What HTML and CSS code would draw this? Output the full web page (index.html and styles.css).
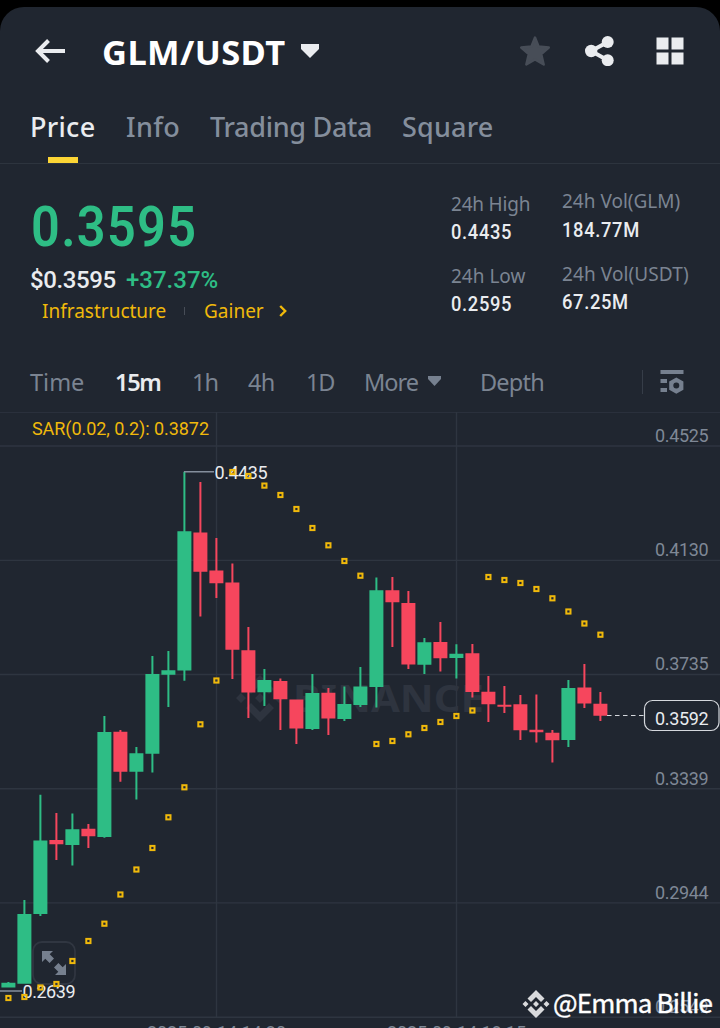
FILE: index.html
```html
<!DOCTYPE html>
<html lang="en">
<head>
<meta charset="utf-8">
<title>GLM/USDT</title>
<link rel="stylesheet" href="styles.css">
</head>
<body>
<main class="screen">
  <header class="header">
    <svg class="back" width="32" height="26" viewBox="0 0 32 26"><path d="M31 13H4M14.500 2.500 4 13 14.500 23.500" fill="none" stroke="#eaecef" stroke-width="4"/></svg>
    <h1 class="pair">GLM/USDT</h1>
    <svg class="caret" width="18" height="14" viewBox="0 0 18 14"><path d="M0 0H18V5L9 14 0 5Z" fill="#eaecef"/></svg>
    <svg class="star" width="30" height="30" viewBox="0 0 30 30"><path d="M15 1.500 18.600 10.500 28.800 11.500 21.300 18.200 23.700 28.500 15 23.500 6.300 28.500 8.700 18.200 1.200 11.500 11.400 10.500Z" fill="#474d57" stroke="#474d57" stroke-width="2.400" stroke-linejoin="round"/></svg>
    <svg class="share" width="30" height="30" viewBox="0 0 30 30"><g fill="#eaecef"><circle cx="6.200" cy="15" r="6.200"/><circle cx="22.700" cy="6" r="6"/><circle cx="22.700" cy="24.200" r="6"/></g><path d="M22.700 6 6.200 15 22.700 24.200" fill="none" stroke="#eaecef" stroke-width="4"/></svg>
    <svg class="grid" width="28" height="28" viewBox="0 0 28 28"><path d="M.500.500h12v12H.500zM15.500.500h12v12h-12zM.500 15.500h12v12H.500zM15.500 15.500h12v12h-12z" fill="#eaecef"/></svg>
  </header>

  <nav class="tabs">
    <span class="tab tab-on">Price</span>
    <span class="tab tab-info">Info</span>
    <span class="tab tab-data">Trading Data</span>
    <span class="tab tab-square">Square</span>
  </nav>

  <section class="summary">
    <div class="quote">
      <div class="last">0.3595</div>
      <div class="sub"><span class="usd">$0.3595</span><span class="pct">+37.37%</span></div>
      <div class="tags"><span class="tag-infra">Infrastructure</span><i class="tick"></i><span class="tag-gain">Gainer</span>
        <svg class="chev" width="8" height="12" viewBox="0 0 8 12"><path d="M1.200 1 6.200 6 1.200 11" fill="none" stroke="#f0b90b" stroke-width="2.400"/></svg></div>
    </div>
    <div class="stats stats-left">
      <span class="label high">24h High</span><span class="value">0.4435</span>
      <span class="label low">24h Low</span><span class="value">0.2595</span>
    </div>
    <div class="stats stats-right">
      <span class="label volg">24h Vol(GLM)</span><span class="value">184.77M</span>
      <span class="label volu">24h Vol(USDT)</span><span class="value">67.25M</span>
    </div>
  </section>

  <nav class="ranges">
    <span class="r-time">Time</span>
    <span class="r-15 active">15m</span>
    <span class="r-1h">1h</span>
    <span class="r-4h">4h</span>
    <span class="r-1d">1D</span>
    <span class="r-more">More</span>
    <svg class="more-caret" width="13" height="10" viewBox="0 0 13 10"><path d="M0 0H13V3L6.500 10 0 3Z" fill="#76808f"/></svg>
    <span class="r-depth">Depth</span>
    <i class="divider"></i>
    <svg class="settings" width="24" height="25" viewBox="0 0 24 25"><path d="M.500 1H23.500V5H.500ZM.500 10H7V14H.500ZM.500 19H7V23H.500Z" fill="#76808f"/><path fill-rule="evenodd" d="M16.300 8.500 23.400 12.500V20.700L16.300 24.700 9.200 20.700V12.500ZM16.300 13.600a3 3 0 1 0 0 6 3 3 0 0 0 0-6Z" fill="#76808f"/></svg>
  </nav>

  <svg class="chart" width="720" height="616" viewBox="0 412 720 616">
    <defs>
      <marker id="dot" markerUnits="userSpaceOnUse" markerWidth="8" markerHeight="8" refX="4" refY="4"><rect x="1.900" y="1.900" width="4.200" height="4.200" fill="none" stroke="#f0b90b" stroke-width="2"/></marker>
    </defs>
    <path class="gridline" d="M0 412H720M0 446H720M0 560.400H720M0 674.500H720M0 788.800H720M0 902.900H720M0 1017.200H720M216.500 412V1017M456.500 412V1017"/>

    <g class="watermark">
      <path d="M260 675 274 689 269 694 260 685 251 694 246 689ZM241 693 246 698 241 703 236 698ZM260 693 265 698 260 703 255 698ZM279 693 284 698 279 703 274 698ZM246 708 251 703 260 712 269 703 274 708 260 722Z"/>
      <text x="293" y="712" textLength="191" lengthAdjust="spacingAndGlyphs">BINANCE</text>
    </g>

    <g class="expand">
      <rect x="33" y="942" width="42" height="42" rx="9"/>
      <path d="M42 951H53L49.700 954.300 54 958.600 49.600 963 45.300 958.700 42 962ZM66 975H55L58.300 971.700 54 967.400 58.400 963 62.700 967.300 66 964Z"/>
    </g>

    <path class="wick up" d="M8.400 982V987M24.400 900V983M40.400 794.700V916M72.400 813.500V865.500M104.400 716V837.700M136.400 747V799.600M152.400 656V772.500M168.400 651V707M184.400 471.700V680.700M264.400 669V706M312.400 674V730M344.400 686.500V721M360.400 667V707M376.400 577.500V707.500M424.400 638V674M456.400 644.300V678.500M568.400 680V747"/>
    <path class="wick down" d="M56.400 813V860M88.400 824V848M120.400 730V781.700M200.400 482V616.500M216.400 538V598M232.400 563.500V679M248.400 627V718M280.400 678.500V730M296.400 700V744M328.400 688V735M392.400 577V647M408.400 591V669M440.400 622V671.500M472.400 644V697.500M488.400 676V722M504.400 686V713M520.400 695V740M536.400 694.500V742.500M552.400 730V762.500M584.400 664V708M600.400 692V721"/>
    <path class="body up" d="M8.400 982.700V987.400M24.400 914V983.700M40.400 840.400V914M72.400 829.200V845M104.400 732V837M136.400 753.300V771.700M152.400 674V753.700M168.400 670.200V674.700M184.400 531.300V670.600M264.400 680V692.200M312.400 693V729M344.400 704V719M360.400 686.400V705M376.400 590.200V687M424.400 642.300V664.700M456.400 653.700V658M568.400 688V740"/>
    <path class="body down" d="M56.400 840V844.200M88.400 828.800V836.200M120.400 731.800V771.700M200.400 532.500V571.800M216.400 570.600V583.300M232.400 582.600V649.700M248.400 650.200V692.400M280.400 681V699.200M296.400 699.600V728.500M328.400 692.700V718.500M392.400 590.200V602.300M408.400 603V664.500M440.400 642V658.200M472.400 653.200V692M488.400 691.700V704.200M504.400 704.800V706.800M520.400 704.200V730.200M536.400 729.800V732.300M552.400 732.800V740.200M584.400 687.400V703.400M600.400 703.700V715.700"/>

    <path class="leader" d="M184 471.700H214M0 991H22"/>
    <text class="mark" x="214.500" y="478.800" textLength="53">0.4435</text>
    <text class="mark" x="22.500" y="997.800" textLength="53">0.2639</text>

    <path class="sar" d="M8.400 998 24.400 997 40.400 987.500 56.400 984 72.400 961 88.400 941 104.400 923.700 120.400 894.500 136.400 869.500 152.400 848 168.400 817.300 184.400 787.300 200.400 724.300 216.400 680.500"/>
    <path class="sar" d="M232.400 472 248.400 476 264.400 485.600 280.400 495 296.400 509 312.400 528 328.400 545.300 344.400 561 360.400 575.700"/>
    <path class="sar" d="M376.400 744 392.400 741 408.400 734.300 424.400 728 440.400 722 456.400 716 472.400 710.500"/>
    <path class="sar" d="M488.400 577 504.400 580 520.400 583 536.400 589 552.400 598.300 568.400 611.500 584.400 623.500 600.400 634.700"/>

    <text class="sar-label" x="32" y="435" textLength="177">SAR(0.02, 0.2): 0.3872</text>
    <g class="axis">
      <text x="655" y="442" textLength="53.500">0.4525</text>
      <text x="655" y="556.200" textLength="53.500">0.4130</text>
      <text x="655" y="670.200" textLength="53.500">0.3735</text>
      <text x="655" y="784.500" textLength="53.500">0.3339</text>
      <text x="655" y="898.800" textLength="53.500">0.2944</text>
      <text x="655" y="1013" textLength="53.500">0.2549</text>
      <text x="147" y="1038.500" textLength="139">2025-09-14 14:30</text>
      <text x="387" y="1038.500" textLength="139">2025-09-14 18:15</text>
    </g>

    <path d="M607 715.500H645" stroke="#d5d8dd" stroke-width="1.200" stroke-dasharray="4.500 3.500"/>
    <rect class="price-box" x="644.500" y="700.500" width="74.500" height="30" rx="8"/>
    <text class="mark" x="655" y="725" textLength="53.500">0.3592</text>

    <g class="author">
      <path d="M536 990 544.500 998.500 541 1002 536 997 531 1002 527.500 998.500ZM525.500 1001 528.500 1004 525.500 1007 522.500 1004ZM536 1001 539 1004 536 1007 533 1004ZM546.500 1001 549.500 1004 546.500 1007 543.500 1004ZM527.500 1009.500 531 1006 536 1011 541 1006 544.500 1009.500 536 1018Z" fill="#d9dadc"/>
      <text x="553" y="1013" textLength="160">@Emma Billie</text>
    </g>
  </svg>
</main>
</body>
</html>
```

FILE: styles.css
```css
* { box-sizing: border-box; }
body {
  margin: 0;
  height: 1028px;
  display: flow-root;
  overflow: hidden;
  background: #000;
  font-family: "Noto Sans", sans-serif;
  color: #eaecef;
}
.screen {
  width: 720px;
  height: 1021px;
  margin-top: 7px;
  background: #202630;
  border-radius: 24px 24px 0 0;
  overflow: hidden;
  white-space: nowrap;
}
svg { display: block; flex: none; }

.header {
  display: flex;
  align-items: center;
  height: 88px;
  padding: 0 35px 0 34px;
}
.pair {
  width: 199px;
  margin: 2px 0 0 36px;
  font-size: 34.5px;
  line-height: 48px;
  font-weight: 700;
  letter-spacing: .4px;
  color: #fff;
}
.star { margin-left: 201px; }
.share { margin-left: 35px; }
.grid { margin-left: 41px; }

.tabs {
  display: flex;
  height: 69px;
  padding-left: 30px;
  border-bottom: 1px solid #2d343e;
  font-size: 27px;
  font-weight: 500;
  line-height: 63px;
  color: #848e9c;
}
.tab { flex: none; }
.tab-on {
  width: 96px;
  letter-spacing: .3px;
  color: #eaecef;
  background: linear-gradient(#fcd535, #fcd535) 18px 100% / 30px 6px no-repeat;
}
.tab-info { width: 84px; letter-spacing: .4px; }
.tab-data { width: 192px; letter-spacing: -.3px; }
.tab-square { letter-spacing: .2px; }

.summary { display: flex; height: 191px; padding-left: 30px; }
.quote { width: 421px; padding-top: 28px; }
.last {
  width: 180px;
  height: 70px;
  margin-left: 1px;
  font: 600 56px/70px Roboto, sans-serif;
  letter-spacing: 1.5px;
  color: #2ebd85;
  transform: scaleX(.9);
  transform-origin: 0 0;
}
.sub { display: flex; height: 34px; font: 500 24px/36px Roboto, sans-serif; }
.usd { width: 96px; letter-spacing: -.4px; }
.pct { color: #2ebd85; }
.tags {
  display: flex;
  align-items: center;
  height: 30px;
  padding-left: 12px;
  font-size: 19px;
  color: #f0b90b;
}
.tag-infra { width: 142px; }
.tick { width: 1px; height: 8px; background: #474d57; margin-right: 19px; }
.tag-gain { width: 75px; }
.stats { display: flex; flex-direction: column; }
.stats-left { width: 111px; padding-top: 26px; }
.stats-right { padding-top: 24px; }
.label { font-size: 19px; line-height: 28px; height: 28px; color: #7b8492; }
.high { letter-spacing: -.2px; }
.volg { line-height: 27px; }
.volu { letter-spacing: .1px; }
.value {
  height: 28px;
  font: 500 19.5px/30px Roboto, sans-serif;
  letter-spacing: .7px;
  transform: scaleX(.94);
  transform-origin: 0 0;
}
.value + .label { margin-top: 16px; }

.ranges {
  display: flex;
  align-items: center;
  height: 57px;
  padding: 0 0 4px 30px;
  font-size: 23.5px;
  line-height: 40px;
  color: #7b8492;
}
.ranges span { flex: none; }
.ranges .active { color: #eaecef; font-weight: 600; letter-spacing: -1.3px; }
.r-time { width: 85px; }
.r-15 { width: 77px; }
.r-1h { width: 56px; letter-spacing: -1px; }
.r-4h { width: 58px; letter-spacing: -.7px; }
.r-1d { width: 58px; letter-spacing: -1.2px; }
.r-more { width: 63px; letter-spacing: -1px; }
.more-caret { margin: -2px 0 0 1px; }
.r-depth { width: 162px; margin-left: 39px; letter-spacing: -.8px; }
.divider { width: 1px; height: 24px; background: #363d48; }
.settings { margin-left: 17px; }

.chart text { font-family: Roboto, sans-serif; }
.gridline { fill: none; stroke: #2e3540; stroke-width: 1.4; }
.watermark { fill: #2e343f; }
.chart .watermark text { font: 700 38px "Noto Sans", sans-serif; }
.expand rect { fill: none; stroke: #303641; stroke-width: 1.8; }
.expand path { fill: #76808f; }
.wick { stroke-width: 2; }
.body { stroke-width: 14; }
.up { stroke: #2ebd85; }
.down { stroke: #f6465d; }
.leader { stroke: #848e9c; stroke-width: 1.6; }
.mark { font-size: 18px; fill: #eaecef; }
.sar { fill: none; marker-start: url(#dot); marker-mid: url(#dot); marker-end: url(#dot); }
.sar-label { font-size: 18px; fill: #f0b90b; }
.axis { font-size: 18px; fill: #7f8896; }
.price-box { fill: #202630; stroke: #d5d8dd; stroke-width: 1.2; }
.chart .author text { font: 400 26px "Noto Sans CJK SC", sans-serif; fill: #fff; stroke: #fff; stroke-width: .4; }
```
